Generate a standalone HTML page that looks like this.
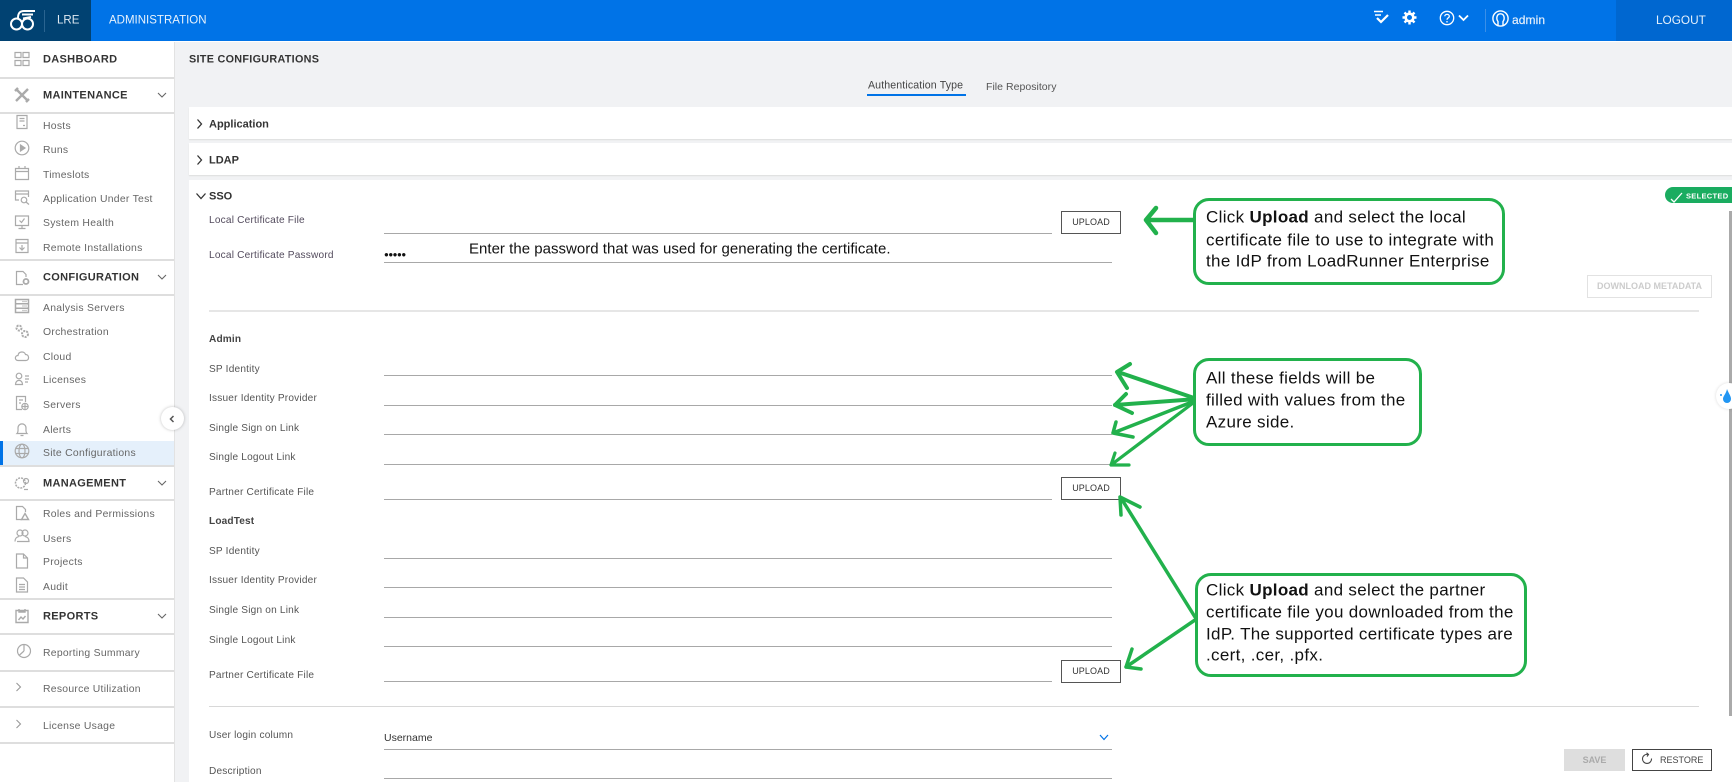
<!DOCTYPE html>
<html><head><meta charset="utf-8"><title>Site Configurations</title>
<style>
html,body{margin:0;padding:0;width:1732px;height:782px;overflow:hidden;background:#fff}
body{position:relative;font-family:"Liberation Sans",sans-serif;color:#555}
div,span.a,svg{position:absolute}
.t{position:absolute;white-space:nowrap;transform:translateY(-50%);line-height:1}
.h{left:43px;font-size:11px;font-weight:700;color:#333;letter-spacing:.32px;transform:translateY(calc(-50% + 1px))}
.s{left:43px;font-size:10.4px;color:#666;letter-spacing:.27px;transform:translateY(calc(-50% + 1px))}
.l{left:209px;font-size:10.1px;color:#555;letter-spacing:.2px;transform:translateY(calc(-50% + 1px))}
.b{left:209px;font-size:10.1px;font-weight:700;color:#444;letter-spacing:.15px;transform:translateY(calc(-50% + 1px))}
.ln{left:384px;height:1px;background:#a8a8a8}
.sb{left:0;width:174px;height:2px;background:#dedede}
.up{left:1061px;width:58px;height:21px;border:1px solid #555;background:#fff;font-size:9px;color:#333;text-align:center;line-height:21px;font-weight:400;letter-spacing:.1px}
.i{left:14px;width:16px;height:16px;fill:none;stroke:#aaa;stroke-width:1.2}
.co{border:3.5px solid #22b14c;background:#fff;border-radius:16px;box-sizing:border-box}
.n{font-size:17px;color:#111;letter-spacing:.32px}
</style></head><body>

<!-- top bar -->
<div style="left:0;top:0;width:1732px;height:41px;background:#0073e7"></div>
<div style="left:0;top:0;width:91px;height:41px;background:#014272"></div>
<div style="left:1616px;top:0;width:116px;height:41px;background:#0067d0"></div>
<svg style="left:0;top:0" width="44" height="41" viewBox="0 0 44 41" fill="none" stroke="#fff" stroke-width="2"><circle cx="16.5" cy="24" r="5.5"/><circle cx="27.5" cy="24" r="5.5"/><path d="M18 18C18 13 20 11 24 11H35M22 14.5H33M23 18.5L31 17"/></svg>
<div style="left:44px;top:10px;width:1px;height:22px;background:#2a6490"></div>
<span class="t" style="left:57px;top:21px;font-size:11.5px;color:#dfe9f1">LRE</span>
<span class="t" style="left:109px;top:21px;font-size:11.5px;color:#e6f1fc">ADMINISTRATION</span>
<svg style="left:1373px;top:10px" width="16" height="15" viewBox="0 0 16 15" fill="none" stroke="#fff"><path d="M1 1.5H10M2 5H8" stroke-width="1.5"/><path d="M4 8 L8 12 L15 5" stroke-width="2.2"/></svg>
<svg style="left:1402px;top:10px" width="15" height="15" viewBox="0 0 15 15"><circle cx="7.5" cy="7.5" r="3.8" fill="none" stroke="#fff" stroke-width="2.6"/><path d="M7.5 .5V14.5M.5 7.5H14.5M2.5 2.5L12.5 12.5M12.5 2.5L2.5 12.5" stroke="#fff" stroke-width="2.4" stroke-dasharray="3 8.5 3 0"/></svg>
<svg style="left:1439px;top:10px" width="16" height="16" viewBox="0 0 16 16" fill="none" stroke="#fff" stroke-width="1.3"><circle cx="8" cy="8" r="6.7"/><path d="M5.8 6.2C5.8 3.8 10.3 3.8 10.3 6.2C10.3 8 8 7.8 8 9.8M8 11V12.5"/></svg>
<svg style="left:1458px;top:14px" width="11" height="8" viewBox="0 0 11 8" fill="none" stroke="#fff" stroke-width="1.8"><path d="M1 1.5L5.5 6L10 1.5"/></svg>
<div style="left:1485px;top:9px;width:1px;height:23px;background:#3a8fe8"></div>
<svg style="left:1492px;top:10px" width="17" height="17" viewBox="0 0 17 17" fill="none" stroke="#fff" stroke-width="1.4"><circle cx="8.5" cy="8.5" r="7.6"/><path d="M6 15V11.5C4 9 4.5 3.8 8.5 3.8S13 9 11 11.5V15"/></svg>
<span class="t" style="left:1512px;top:20px;font-size:12px;color:#e3eefb;letter-spacing:.1px;-webkit-text-stroke:.2px #e3eefb">admin</span>
<span class="t" style="left:1656px;top:21px;font-size:11.8px;color:#e6f1fc">LOGOUT</span>

<!-- content bg -->
<div style="left:174px;top:42px;width:1558px;height:740px;background:#f1f2f4"></div>

<!-- sidebar -->
<div style="left:0;top:42px;width:174px;height:740px;background:#fff;border-right:1px solid #e2e2e2"></div>
<div class="sb" style="top:77px"></div>
<div class="sb" style="top:112px"></div>
<div class="sb" style="top:259px"></div>
<div class="sb" style="top:294px"></div>
<div style="left:0;top:441px;width:174px;height:24px;background:#e5f0fb"></div>
<div style="left:0;top:441px;width:3px;height:24px;background:#0073e7"></div>
<div class="sb" style="top:465px"></div>
<div class="sb" style="top:499px"></div>
<div class="sb" style="top:598px"></div>
<div class="sb" style="top:633px"></div>
<div class="sb" style="top:670px"></div>
<div class="sb" style="top:706px"></div>
<div class="sb" style="top:742px"></div>

<span class="t h" style="top:59px">DASHBOARD</span>
<span class="t h" style="top:95px">MAINTENANCE</span>
<span class="t s" style="top:126px">Hosts</span>
<span class="t s" style="top:150px">Runs</span>
<span class="t s" style="top:175px">Timeslots</span>
<span class="t s" style="top:199px">Application Under Test</span>
<span class="t s" style="top:223px">System Health</span>
<span class="t s" style="top:248px">Remote Installations</span>
<span class="t h" style="top:277px">CONFIGURATION</span>
<span class="t s" style="top:308px">Analysis Servers</span>
<span class="t s" style="top:332px">Orchestration</span>
<span class="t s" style="top:357px">Cloud</span>
<span class="t s" style="top:380px">Licenses</span>
<span class="t s" style="top:405px">Servers</span>
<span class="t s" style="top:430px">Alerts</span>
<span class="t s" style="top:453px">Site Configurations</span>
<span class="t h" style="top:483px">MANAGEMENT</span>
<span class="t s" style="top:514px">Roles and Permissions</span>
<span class="t s" style="top:539px">Users</span>
<span class="t s" style="top:562px">Projects</span>
<span class="t s" style="top:587px">Audit</span>
<span class="t h" style="top:616px">REPORTS</span>
<span class="t s" style="top:653px">Reporting Summary</span>
<span class="t s" style="top:689px">Resource Utilization</span>
<span class="t s" style="top:726px">License Usage</span>

<!-- sidebar chevrons -->
<svg style="left:157px;top:92px" width="10" height="7" viewBox="0 0 10 7" fill="none" stroke="#666" stroke-width="1.1"><path d="M1 1L5 5L9 1"/></svg>
<svg style="left:157px;top:274px" width="10" height="7" viewBox="0 0 10 7" fill="none" stroke="#666" stroke-width="1.1"><path d="M1 1L5 5L9 1"/></svg>
<svg style="left:157px;top:480px" width="10" height="7" viewBox="0 0 10 7" fill="none" stroke="#666" stroke-width="1.1"><path d="M1 1L5 5L9 1"/></svg>
<svg style="left:157px;top:613px" width="10" height="7" viewBox="0 0 10 7" fill="none" stroke="#666" stroke-width="1.1"><path d="M1 1L5 5L9 1"/></svg>
<svg style="left:15px;top:682px" width="7" height="10" viewBox="0 0 7 10" fill="none" stroke="#999" stroke-width="1.1"><path d="M1.5 1L5.5 5L1.5 9"/></svg>
<svg style="left:15px;top:719px" width="7" height="10" viewBox="0 0 7 10" fill="none" stroke="#999" stroke-width="1.1"><path d="M1.5 1L5.5 5L1.5 9"/></svg>

<!-- sidebar icons -->
<svg class="i" style="top:51px" viewBox="0 0 16 16"><path d="M1 1.5h6v5h-6zM9 1.5h6v5h-6zM1 9.5h6v5h-6zM9 9.5h6v5h-6z"/></svg>
<svg class="i" style="top:87px" viewBox="0 0 16 16"><path d="M2 2L14 14M14 2L2 14M1 4L4 1M12 15L15 12" stroke-width="2.4"/></svg>
<svg class="i" style="top:114px" viewBox="0 0 16 16"><path d="M3 1.5h10v13H3zM5.5 4.5h5M5.5 7h5M9 11.5h2"/></svg>
<svg class="i" style="top:140px" viewBox="0 0 16 16"><circle cx="8" cy="8" r="6.8"/><path d="M6.5 5L11 8L6.5 11z" fill="#aaa"/></svg>
<svg class="i" style="top:165px" viewBox="0 0 16 16"><path d="M1.5 3.5h13v11h-13zM1.5 6.5h13M5 1v2.5M11 1v2.5"/></svg>
<svg class="i" style="top:189px" viewBox="0 0 16 16"><path d="M5 11H1.5V2h13v6M1.5 5h13"/><circle cx="10" cy="11" r="2.8"/><path d="M12 13L15 15.5"/></svg>
<svg class="i" style="top:214px" viewBox="0 0 16 16"><path d="M1.5 2h13v9.5h-13zM8 11.5V14M4.5 14.5h7M5.5 6.5L7.5 8.5L10.5 4.5"/></svg>
<svg class="i" style="top:238px" viewBox="0 0 16 16"><path d="M2 1.5h12v13H2zM2 5h12M8 7v5M5.5 9.5L8 12L10.5 9.5"/></svg>
<svg class="i" style="top:270px" viewBox="0 0 16 16"><path d="M9 14.5H2.5v-13h6.5l3 3V7"/><circle cx="12" cy="11.5" r="2.5" stroke-width="1.8"/></svg>
<svg class="i" style="top:298px" viewBox="0 0 16 16"><path d="M1.5 1.5h13v13h-13zM1.5 5.8h13M1.5 10.2h13" stroke-width="1.5"/><path d="M8 3.5h5M8 8h5M8 12.5h5" stroke="#ccc"/></svg>
<svg class="i" style="top:323px" viewBox="0 0 16 16"><circle cx="5" cy="5" r="2.5" stroke-dasharray="2 1" stroke-width="2"/><circle cx="11" cy="11" r="3" stroke-dasharray="2 1" stroke-width="2"/></svg>
<svg class="i" style="top:348px" viewBox="0 0 16 16"><path d="M4 12.5C.5 12.5 .5 7.5 4 7.5C4.5 3 10.5 3 11.5 6.5C15.5 6.5 15.5 12.5 12 12.5z"/></svg>
<svg class="i" style="top:371px" viewBox="0 0 16 16"><circle cx="5" cy="5" r="2.8"/><path d="M1.5 13.5C1.5 8 8.5 8 8.5 13.5zM11 5h4M11 8h4M11 11h3"/></svg>
<svg class="i" style="top:395px" viewBox="0 0 16 16"><path d="M8 14.5H2.5v-13h9V7M5 5h4M5 8h2"/><circle cx="11" cy="11.5" r="3.2"/><path d="M7.8 11.5h6.4M11 8.3v6.4"/></svg>
<svg class="i" style="top:421px" viewBox="0 0 16 16"><path d="M3 12.5h10C11.5 11 12 9 12 7C12 1.5 4 1.5 4 7C4 9 4.5 11 3 12.5zM6.5 14.5h3"/></svg>
<svg class="i" style="top:443px" viewBox="0 0 16 16"><circle cx="8" cy="8" r="6.8"/><ellipse cx="8" cy="8" rx="3" ry="6.8"/><path d="M1.5 5.5h13M1.5 10.5h13"/></svg>
<svg class="i" style="top:475px" viewBox="0 0 16 16"><circle cx="6.5" cy="8" r="5" stroke-width="1.5" stroke-dasharray="2 1"/><circle cx="12" cy="6" r="2.5"/><path d="M10 14.5h4"/></svg>
<svg class="i" style="top:505px" viewBox="0 0 16 16"><path d="M8 14.5H2.5v-13h6l3 3V7"/><path d="M11 8.5L14.5 14.5H7.5z" stroke-width="1.4"/></svg>
<svg class="i" style="top:528px" viewBox="0 0 16 16"><circle cx="6" cy="5" r="3"/><circle cx="11" cy="5" r="3"/><path d="M1 13.5C1 9 4 9 5 8.5M7 13.5h8C15 9 12 9 11 8.5M3 13.5h4"/></svg>
<svg class="i" style="top:553px" viewBox="0 0 16 16"><path d="M2.5 1h7l4 4v10h-11zM9.5 1v4h4"/></svg>
<svg class="i" style="top:577px" viewBox="0 0 16 16"><path d="M2.5 1h7l4 4v10h-11zM5 7.5h6M5 10h6M5 12.5h6"/></svg>
<svg class="i" style="top:608px" viewBox="0 0 16 16"><path d="M2 2.5h12v12H2zM5 1v3h6V1M4.5 12L7 9L9 11L11.5 8" stroke-width="1.4"/></svg>
<svg class="i" style="left:16px;top:643px" viewBox="0 0 16 16"><circle cx="8" cy="8" r="6.5"/><path d="M8 8V1.5M8 8L3 12.5"/></svg>

<!-- collapse handle -->
<div style="left:161px;top:407px;width:23px;height:23px;border-radius:50%;background:#fff;box-shadow:0 0 3px rgba(0,0,0,.25)"></div>
<svg style="left:169px;top:415px" width="6" height="8" viewBox="0 0 6 8" fill="none" stroke="#555" stroke-width="1.5"><path d="M4.5 1L1.5 4L4.5 7"/></svg>

<!-- heading + tabs -->
<span class="t" style="left:189px;top:60px;font-size:10.8px;font-weight:700;color:#333;letter-spacing:.3px">SITE CONFIGURATIONS</span>
<span class="t" style="left:868px;top:86px;font-size:10.6px;color:#444;letter-spacing:.12px">Authentication Type</span>
<div style="left:867px;top:94px;width:99px;height:2px;background:#0073e7"></div>
<span class="t" style="left:986px;top:87px;font-size:10.5px;color:#555;letter-spacing:.03px">File Repository</span>

<!-- panels -->
<div style="left:189px;top:107px;width:1543px;height:32px;background:#fff;box-shadow:0 1px 1px #ddd"></div>
<div style="left:189px;top:143px;width:1543px;height:32px;background:#fff;box-shadow:0 1px 1px #ddd"></div>
<div style="left:189px;top:180px;width:1543px;height:602px;background:#fff"></div>
<svg style="left:196px;top:118px" width="7" height="12" viewBox="0 0 7 12" fill="none" stroke="#333" stroke-width="1.3"><path d="M1.5 1.5L5.5 6L1.5 10.5"/></svg>
<svg style="left:196px;top:154px" width="7" height="12" viewBox="0 0 7 12" fill="none" stroke="#333" stroke-width="1.3"><path d="M1.5 1.5L5.5 6L1.5 10.5"/></svg>
<svg style="left:195px;top:192px" width="12" height="8" viewBox="0 0 12 8" fill="none" stroke="#333" stroke-width="1.3"><path d="M1.5 1.5L6 6.5L10.5 1.5"/></svg>
<span class="t" style="left:209px;top:125px;font-size:11px;font-weight:700;color:#333">Application</span>
<span class="t" style="left:209px;top:161px;font-size:11px;font-weight:700;color:#333">LDAP</span>
<span class="t" style="left:209px;top:197px;font-size:11px;font-weight:700;color:#333">SSO</span>

<!-- labels -->
<span class="t l" style="top:220px;color:#524a5c">Local Certificate File</span>
<span class="t l" style="top:255px;color:#524a5c">Local Certificate Password</span>
<span class="t b" style="top:339px">Admin</span>
<span class="t l" style="top:369px">SP Identity</span>
<span class="t l" style="top:398px">Issuer Identity Provider</span>
<span class="t l" style="top:428px">Single Sign on Link</span>
<span class="t l" style="top:457px">Single Logout Link</span>
<span class="t l" style="top:492px">Partner Certificate File</span>
<span class="t b" style="top:521px">LoadTest</span>
<span class="t l" style="top:551px">SP Identity</span>
<span class="t l" style="top:580px">Issuer Identity Provider</span>
<span class="t l" style="top:610px">Single Sign on Link</span>
<span class="t l" style="top:640px">Single Logout Link</span>
<span class="t l" style="top:675px">Partner Certificate File</span>
<span class="t l" style="top:735px">User login column</span>
<span class="t l" style="top:771px">Description</span>

<!-- field lines -->
<div class="ln" style="top:233px;width:668px"></div>
<div class="ln" style="top:262px;width:728px"></div>
<div class="ln" style="top:375px;width:728px"></div>
<div class="ln" style="top:405px;width:728px"></div>
<div class="ln" style="top:434px;width:728px"></div>
<div class="ln" style="top:464px;width:728px"></div>
<div class="ln" style="top:499px;width:668px"></div>
<div class="ln" style="top:558px;width:728px"></div>
<div class="ln" style="top:587px;width:728px"></div>
<div class="ln" style="top:617px;width:728px"></div>
<div class="ln" style="top:646px;width:728px"></div>
<div class="ln" style="top:681px;width:668px"></div>
<div class="ln" style="top:749px;width:728px"></div>
<div class="ln" style="top:778px;width:728px"></div>
<div style="left:209px;top:310px;width:1490px;height:2px;background:#e6e6e6"></div>
<div style="left:209px;top:706px;width:1490px;height:1px;background:#d8d8d8"></div>

<span class="t" style="left:384px;top:255px;font-size:8px;color:#111;letter-spacing:-.5px;font-weight:700">●●●●●</span>
<span class="t" style="left:469px;top:249px;font-size:15px;color:#111;letter-spacing:.02px">Enter the password that was used for generating the certificate.</span>
<span class="t" style="left:384px;top:738px;font-size:10.5px;color:#333">Username</span>
<svg style="left:1099px;top:734px" width="10" height="7" viewBox="0 0 10 7" fill="none" stroke="#0073e7" stroke-width="1.2"><path d="M1 1L5 5.5L9 1"/></svg>

<!-- buttons -->
<div class="up" style="top:211px">UPLOAD</div>
<div class="up" style="top:477px">UPLOAD</div>
<div class="up" style="top:660px">UPLOAD</div>
<div style="left:1587px;top:275px;width:123px;height:21px;border:1px solid #e2e2e2;font-size:9px;font-weight:700;color:#ccc;text-align:center;line-height:21px">DOWNLOAD METADATA</div>
<div style="left:1564px;top:749px;width:61px;height:22px;background:#dedede;font-size:9px;font-weight:700;color:#aaa;text-align:center;line-height:23px">SAVE</div>
<div style="left:1632px;top:749px;width:78px;height:20px;border:1px solid #444;font-size:9px;color:#444;line-height:21px"><span style="position:absolute;left:27px;white-space:nowrap">RESTORE</span></div>
<svg style="left:1641px;top:752px" width="12" height="13" viewBox="0 0 12 13" fill="none" stroke="#444" stroke-width="1.1"><path d="M7 2.5A4.5 4.5 0 1 0 10.5 6.5M5.5 .8L7.5 2.5L6 4.5"/></svg>

<!-- selected badge -->
<div style="left:1665px;top:187px;width:67px;height:16px;background:#1aac60;border-radius:8px 0 0 8px"></div>
<svg style="left:1670px;top:192px" width="13" height="11" viewBox="0 0 13 11" fill="none" stroke="#fff" stroke-width="1.3"><path d="M1 7L4 10L12 1"/></svg>
<span class="t" style="left:1686px;top:196px;font-size:7.5px;font-weight:700;color:#fff;letter-spacing:.3px">SELECTED</span>

<!-- scrollbar + droplet -->
<div style="left:1729px;top:211px;width:3px;height:505px;background:#aaa"></div>
<div style="left:1716px;top:383px;width:26px;height:26px;border-radius:50%;background:#fff;box-shadow:0 0 3px rgba(0,0,0,.15)"></div>
<svg style="left:1720px;top:387px" width="12" height="17" viewBox="0 0 12 17"><path d="M7 2C9 7 11 9 11 12A4 4 0 0 1 3 12C3 9 6 7 7 2z" fill="#2196f3"/><circle cx="1" cy="8" r="1" fill="#2196f3"/></svg>

<!-- annotation arrows -->
<svg style="left:0;top:0" width="1732" height="782" viewBox="0 0 1732 782" fill="none" stroke="#22b14c" stroke-linecap="round" stroke-linejoin="round">
<path d="M1195 220H1147M1156 208L1146 220L1156 233" stroke-width="4.5"/>
<path d="M1197 399L1118 372M1130 364L1117 372L1127 388" stroke-width="4"/>
<path d="M1197 399L1115 405M1126 394L1115 405L1132 413" stroke-width="4"/>
<path d="M1197 400L1113 433M1116 422L1113 433L1133 437" stroke-width="3.5"/>
<path d="M1197 400L1111 465M1115 453L1111 465H1129" stroke-width="3.2"/>
<path d="M1195 617L1121 498M1121 515L1120 497L1140 507" stroke-width="3.5"/>
<path d="M1195 620L1126 667M1132 649L1126 667L1141 669" stroke-width="3.5"/>
</svg>

<!-- callouts -->
<div class="co" style="left:1193px;top:198px;width:312px;height:87px"></div>
<span class="t n" style="left:1206px;top:217px">Click <b>Upload</b> and select the local</span>
<span class="t n" style="left:1206px;top:240px">certificate file to use to integrate with</span>
<span class="t n" style="left:1206px;top:261px">the IdP from LoadRunner Enterprise</span>

<div class="co" style="left:1193px;top:358px;width:229px;height:88px"></div>
<span class="t n" style="left:1206px;top:378px">All these fields will be</span>
<span class="t n" style="left:1206px;top:400px">filled with values from the</span>
<span class="t n" style="left:1206px;top:422px">Azure side.</span>

<div class="co" style="left:1195px;top:573px;width:332px;height:104px"></div>
<span class="t n" style="left:1206px;top:590px">Click <b>Upload</b> and select the partner</span>
<span class="t n" style="left:1206px;top:612px">certificate file you downloaded from the</span>
<span class="t n" style="left:1206px;top:634px">IdP. The supported certificate types are</span>
<span class="t n" style="left:1206px;top:655px">.cert, .cer, .pfx.</span>
</body></html>
